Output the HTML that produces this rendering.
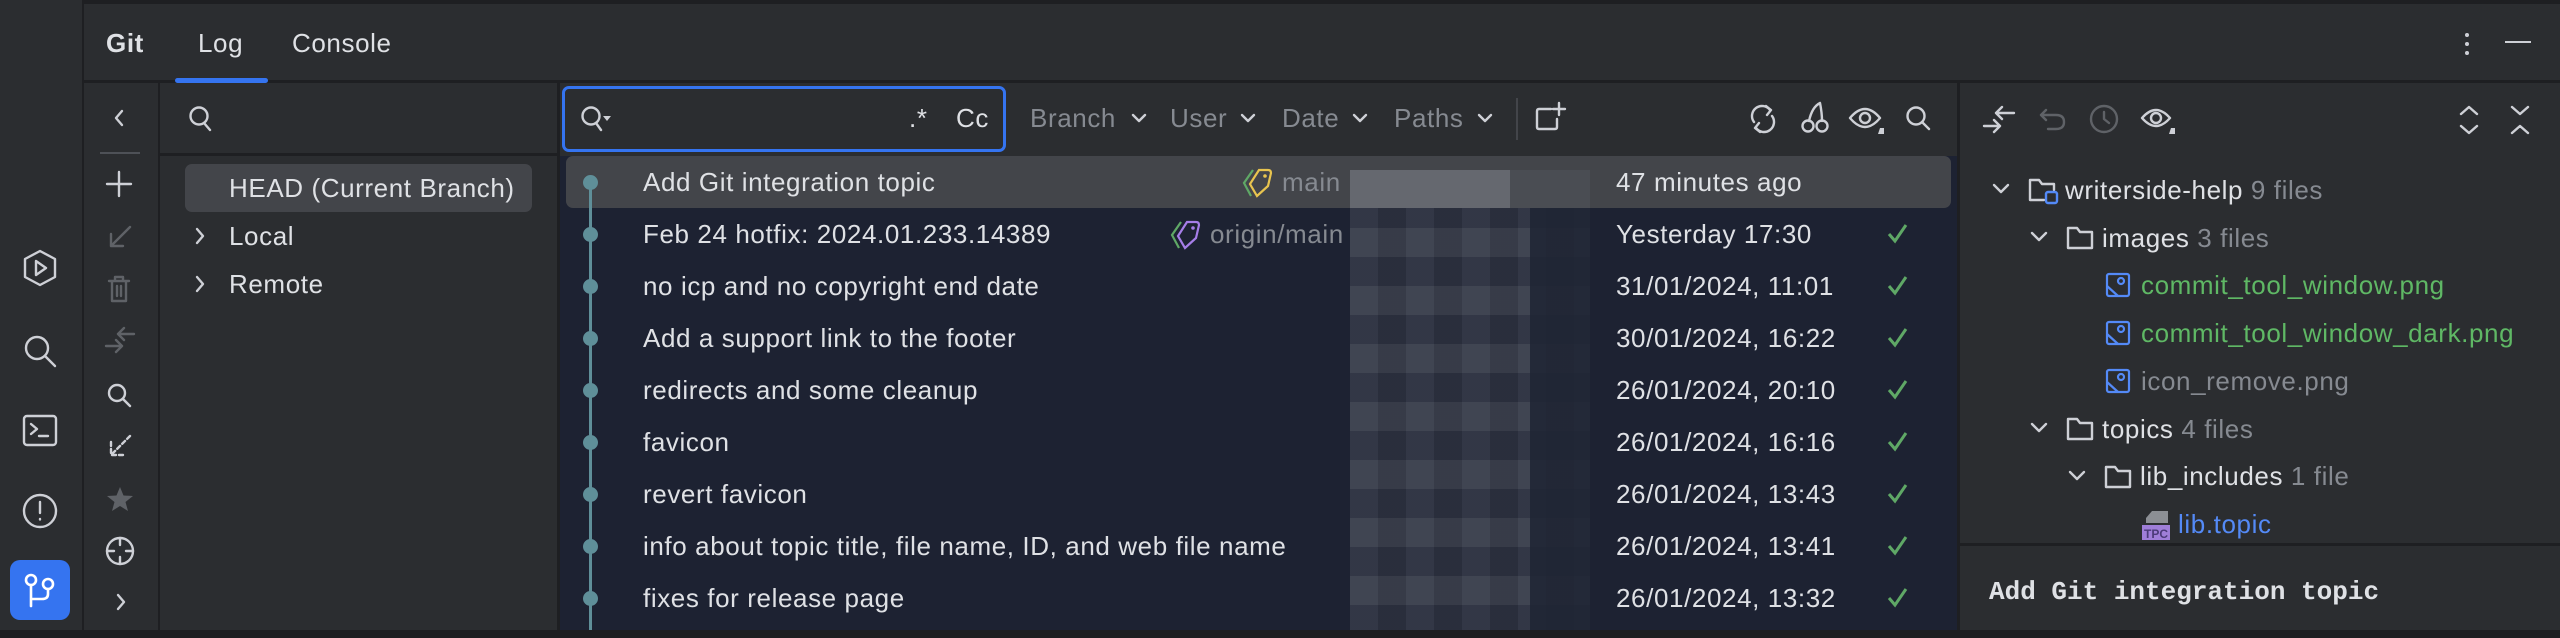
<!DOCTYPE html>
<html><head><meta charset="utf-8">
<style>
*{box-sizing:border-box;margin:0;padding:0}
body{width:2560px;height:638px;background:#2b2d30;font-family:"Liberation Sans",sans-serif;color:#dfe1e5;position:relative;overflow:hidden}
.a{position:absolute}
.t{position:absolute;font-size:26px;letter-spacing:0.6px;white-space:nowrap;line-height:28px}
.g{color:#868a91}
svg{position:absolute;overflow:visible}
.ic{fill:none;stroke:#ced0d6;stroke-width:2.4;stroke-linecap:round;stroke-linejoin:round}
.dim{stroke:#5f6267}
.chk{fill:none;stroke:#5fa866;stroke-width:3}
</style></head><body>
<div class="a" style="left:82px;top:0;width:2px;height:638px;background:#1e1f22"></div>
<div class="a" style="left:82px;top:0;width:2478px;height:4px;background:#1e1f22"></div>
<div class="a" style="left:82px;top:80px;width:2478px;height:3px;background:#1e1f22"></div>
<div class="a" style="left:158px;top:83px;width:2px;height:547px;background:#1e1f22"></div>
<div class="a" style="left:557px;top:83px;width:3px;height:547px;background:#1e1f22"></div>
<div class="a" style="left:1957px;top:83px;width:3px;height:547px;background:#1e1f22"></div>
<div class="a" style="left:160px;top:153px;width:398px;height:3px;background:#1e1f22"></div>
<div class="a" style="left:0;top:630px;width:2560px;height:8px;background:#1e1f22"></div>

<div class="t" style="left:106px;top:29px;font-weight:bold">Git</div>
<div class="t" style="left:198px;top:29px">Log</div>
<div class="t" style="left:292px;top:29px">Console</div>
<div class="a" style="left:175px;top:78px;width:93px;height:5px;background:#3574f0;border-radius:3px"></div>
<div class="a" style="left:2465px;top:33px;width:4px;height:4px;border-radius:2px;background:#ced0d6;box-shadow:0 9px 0 #ced0d6,0 18px 0 #ced0d6"></div>
<div class="a" style="left:2505px;top:41px;width:26px;height:2px;background:#ced0d6"></div>

<svg style="left:20px;top:248px" width="40" height="40"><path class="ic" d="M20 3 L35 11 L35 29 L20 37 L5 29 L5 11 Z M16 13 L26 20 L16 27 Z"/></svg>
<svg style="left:22px;top:333px" width="36" height="36"><circle class="ic" cx="15" cy="15" r="11"/><path class="ic" d="M23 23 L33 33"/></svg>
<svg style="left:22px;top:414px" width="36" height="34"><rect class="ic" x="2" y="2" width="32" height="29" rx="3"/><path class="ic" d="M9 10 L15 15 L9 20 M17 22 L26 22"/></svg>
<svg style="left:22px;top:493px" width="36" height="36"><circle class="ic" cx="18" cy="18" r="16"/><path class="ic" d="M18 9 L18 20 M18 26 L18 26.5"/></svg>
<div class="a" style="left:10px;top:560px;width:60px;height:60px;background:#3574f0;border-radius:10px"></div>
<svg style="left:22px;top:572px" width="36" height="36"><g fill="none" stroke="#fff" stroke-width="2.6" stroke-linecap="round"><circle cx="9" cy="8" r="5"/><circle cx="26" cy="12" r="5"/><path d="M9 13 L9 34 M26 17 L26 22 Q26 27 20 27 L9 27"/></g></svg>

<svg style="left:112px;top:108px" width="16" height="20"><path class="ic" d="M10 3 L4 10 L10 17"/></svg>
<div class="a" style="left:100px;top:152px;width:40px;height:2px;background:#4e5157"></div>
<svg style="left:105px;top:170px" width="28" height="28"><path class="ic" d="M14 2 L14 26 M2 14 L26 14"/></svg>
<svg style="left:108px;top:225px" width="24" height="24"><path class="ic dim" d="M22 2 L3 21 M3 9 L3 21 L15 21"/></svg>
<svg style="left:106px;top:275px" width="26" height="28"><path class="ic dim" d="M3 6 L23 6 M9 6 L9 2 L17 2 L17 6 M6 6 L6 26 L20 26 L20 6 M11 11 L11 21 M15 11 L15 21"/></svg>
<svg style="left:104px;top:326px" width="32" height="28"><path class="ic dim" d="M14 8 L30 8 M20 2 L14 8 L20 14 M2 20 L18 20 M12 14 L18 20 L12 26"/></svg>
<svg style="left:106px;top:382px" width="26" height="26"><circle class="ic" cx="11" cy="11" r="8"/><path class="ic" d="M17 17 L24 24"/></svg>
<svg style="left:108px;top:434px" width="24" height="24"><path class="ic" d="M22 2 L4 20 M3 8 L3 21 L16 21" stroke-dasharray="4 3"/></svg>
<svg style="left:106px;top:486px" width="28" height="26"><path fill="#5f6267" d="M14 1 L17.5 9.5 L27 10 L19.5 16 L22 25 L14 20 L6 25 L8.5 16 L1 10 L10.5 9.5 Z"/></svg>
<svg style="left:105px;top:536px" width="30" height="30"><circle class="ic" cx="15" cy="15" r="13"/><path class="ic" d="M15 2 L15 9 M15 21 L15 28 M2 15 L9 15 M21 15 L28 15"/></svg>
<svg style="left:114px;top:592px" width="14" height="20"><path class="ic" d="M4 3 L10 10 L4 17"/></svg>

<svg style="left:188px;top:105px" width="26" height="28"><circle class="ic" cx="11" cy="11" r="8.5"/><path class="ic" d="M16 18 L22 25"/></svg>
<div class="a" style="left:185px;top:164px;width:347px;height:48px;background:#43454a;border-radius:7px"></div>
<div class="t" style="left:229px;top:174px">HEAD (Current Branch)</div>
<svg style="left:194px;top:226px" width="12" height="20"><path class="ic" d="M3 3 L9 10 L3 17"/></svg>
<div class="t" style="left:229px;top:222px">Local</div>
<svg style="left:194px;top:274px" width="12" height="20"><path class="ic" d="M3 3 L9 10 L3 17"/></svg>
<div class="t" style="left:229px;top:270px">Remote</div>

<div class="a" style="left:562px;top:86px;width:444px;height:66px;border:3px solid #3574f0;border-radius:7px"></div>
<svg style="left:580px;top:105px" width="34" height="28"><circle class="ic" cx="11" cy="11" r="8.5"/><path class="ic" d="M16 18 L21 25"/><path fill="#ced0d6" d="M23 11 L31 11 L27 16 Z"/></svg>
<div class="t" style="left:909px;top:104px">.*</div>
<div class="t" style="left:956px;top:104px">Cc</div>
<div class="t g" style="left:1030px;top:104px">Branch</div>
<svg style="left:1131px;top:112px" width="16" height="12"><path class="ic" stroke="#868a91" d="M2 3 L8 9 L14 3"/></svg>
<div class="t g" style="left:1170px;top:104px">User</div>
<svg style="left:1240px;top:112px" width="16" height="12"><path class="ic" stroke="#868a91" d="M2 3 L8 9 L14 3"/></svg>
<div class="t g" style="left:1282px;top:104px">Date</div>
<svg style="left:1352px;top:112px" width="16" height="12"><path class="ic" stroke="#868a91" d="M2 3 L8 9 L14 3"/></svg>
<div class="t g" style="left:1394px;top:104px">Paths</div>
<svg style="left:1477px;top:112px" width="16" height="12"><path class="ic" stroke="#868a91" d="M2 3 L8 9 L14 3"/></svg>
<div class="a" style="left:1516px;top:98px;width:2px;height:42px;background:#43454a"></div>
<svg style="left:1535px;top:101px" width="32" height="30"><path class="ic" d="M16 8 L4 8 Q2 8 2 10 L2 26 Q2 28 4 28 L20 28 Q22 28 22 26 L22 18 M24 2 L24 14 M18 8 L30 8"/></svg>
<svg style="left:1748px;top:104px" width="30" height="30"><path class="ic" d="M6 18 A10 10 0 0 1 22 6 M24 12 A10 10 0 0 1 8 24 M18 2 L23 6 L19 11 M12 28 L7 24 L11 19"/></svg>
<svg style="left:1800px;top:101px" width="30" height="34"><path class="ic" d="M20 2 Q12 6 9 20 M20 2 Q22 12 22 20"/><circle class="ic" cx="8" cy="25" r="5.5"/><circle class="ic" cx="22" cy="25" r="5.5"/></svg>
<svg style="left:1848px;top:104px" width="38" height="32"><path class="ic" d="M2 14 Q17 -4 32 14 Q17 32 2 14 Z"/><circle class="ic" cx="17" cy="14" r="5"/><path fill="#ced0d6" d="M32 24 L36 24 L36 30 L30 30 Z"/></svg>
<svg style="left:1905px;top:105px" width="28" height="28"><circle class="ic" cx="11" cy="11" r="8.5"/><path class="ic" d="M17 17 L24 24"/></svg>

<div class="a" style="left:560px;top:156px;width:1397px;height:474px;background:#1d2232"></div>
<div class="a" style="left:566px;top:156px;width:1385px;height:52px;background:#43454a;border-radius:7px"></div>
<div class="a" style="left:589px;top:182px;width:3px;height:448px;background:#5f8f99"></div>
<div class="a" style="left:1350px;top:170px;width:240px;height:460px;background:repeating-linear-gradient(180deg,#3a3f4c 0 29px,#2c3140 29px 58px)"></div>
<div class="a" style="left:1350px;top:170px;width:240px;height:460px;background:repeating-linear-gradient(90deg,rgba(255,255,255,0.03) 0 28px,rgba(0,0,0,0.06) 28px 56px)"></div>
<div class="a" style="left:1530px;top:170px;width:60px;height:460px;background:#1f2434;opacity:.85"></div>
<div class="a" style="left:1350px;top:170px;width:240px;height:38px;background:#65686f"></div>
<div class="a" style="left:1510px;top:170px;width:80px;height:38px;background:#4a4d53"></div>

<div class="a" style="left:583px;top:175px;width:15px;height:15px;border-radius:50%;background:#5f8f99;box-shadow:0 52px 0 #5f8f99,0 104px 0 #5f8f99,0 156px 0 #5f8f99,0 208px 0 #5f8f99,0 260px 0 #5f8f99,0 312px 0 #5f8f99,0 364px 0 #5f8f99,0 416px 0 #5f8f99"></div>
<div class="t" style="left:643px;top:168px">Add Git integration topic</div>
<div class="t" style="left:643px;top:220px">Feb 24 hotfix: 2024.01.233.14389</div>
<div class="t" style="left:643px;top:272px">no icp and no copyright end date</div>
<div class="t" style="left:643px;top:324px">Add a support link to the footer</div>
<div class="t" style="left:643px;top:376px">redirects and some cleanup</div>
<div class="t" style="left:643px;top:428px">favicon</div>
<div class="t" style="left:643px;top:480px">revert favicon</div>
<div class="t" style="left:643px;top:532px">info about topic title, file name, ID, and web file name</div>
<div class="t" style="left:643px;top:584px">fixes for release page</div>
<svg style="left:1242px;top:168px" width="36" height="30"><path fill="none" stroke="#5fa866" stroke-width="2.2" d="M11 2 L2 15 L9 28"/><path fill="none" stroke="#e8c44f" stroke-width="2.2" d="M17 2 L26 2 Q29 2 29 5 L26 18 L15 28 L8 16 Z"/><circle cx="23" cy="8" r="1.8" fill="#e8c44f"/></svg>
<div class="t g" style="left:1282px;top:168px">main</div>
<svg style="left:1170px;top:220px" width="36" height="30"><path fill="none" stroke="#5fa866" stroke-width="2.2" d="M11 2 L2 15 L9 28"/><path fill="none" stroke="#a67ee8" stroke-width="2.2" d="M17 2 L26 2 Q29 2 29 5 L26 18 L15 28 L8 16 Z"/><circle cx="23" cy="8" r="1.8" fill="#a67ee8"/></svg>
<div class="t g" style="left:1210px;top:220px">origin/main</div>
<div class="t" style="left:1616px;top:168px">47 minutes ago</div>
<div class="t" style="left:1616px;top:220px">Yesterday 17:30</div>
<div class="t" style="left:1616px;top:272px">31/01/2024, 11:01</div>
<div class="t" style="left:1616px;top:324px">30/01/2024, 16:22</div>
<div class="t" style="left:1616px;top:376px">26/01/2024, 20:10</div>
<div class="t" style="left:1616px;top:428px">26/01/2024, 16:16</div>
<div class="t" style="left:1616px;top:480px">26/01/2024, 13:43</div>
<div class="t" style="left:1616px;top:532px">26/01/2024, 13:41</div>
<div class="t" style="left:1616px;top:584px">26/01/2024, 13:32</div>
<svg style="left:1886px;top:222px" width="24" height="376"><g class="chk"><path d="M3 12 L9 19 L20 3"/><path transform="translate(0,52)" d="M3 12 L9 19 L20 3"/><path transform="translate(0,104)" d="M3 12 L9 19 L20 3"/><path transform="translate(0,156)" d="M3 12 L9 19 L20 3"/><path transform="translate(0,208)" d="M3 12 L9 19 L20 3"/><path transform="translate(0,260)" d="M3 12 L9 19 L20 3"/><path transform="translate(0,312)" d="M3 12 L9 19 L20 3"/><path transform="translate(0,364)" d="M3 12 L9 19 L20 3"/></g></svg>

<svg style="left:1982px;top:104px" width="34" height="32"><path class="ic" d="M14 9 L32 9 M20 3 L14 9 L20 15 M2 22 L18 22 M12 16 L18 22 L12 28"/></svg>
<svg style="left:2038px;top:106px" width="30" height="28"><path class="ic dim" d="M8 4 L3 9 L8 14 M3 9 L18 9 Q26 9 26 16 Q26 23 18 23 L10 23"/></svg>
<svg style="left:2089px;top:104px" width="30" height="30"><circle class="ic dim" cx="15" cy="15" r="13"/><path class="ic dim" d="M15 8 L15 15 L20 19"/></svg>
<svg style="left:2140px;top:106px" width="36" height="30"><path class="ic" d="M2 12 Q16 -4 30 12 Q16 28 2 12 Z"/><circle class="ic" cx="16" cy="12" r="5"/><path fill="#ced0d6" d="M31 22 L35 22 L35 28 L29 28 Z"/></svg>
<svg style="left:2458px;top:104px" width="22" height="32"><path class="ic" d="M3 10 L11 3 L19 10 M3 22 L11 29 L19 22"/></svg>
<svg style="left:2509px;top:104px" width="22" height="32"><path class="ic" d="M3 3 L11 10 L19 3 M3 29 L11 22 L19 29"/></svg>

<svg style="left:1992px;top:182px" width="18" height="14"><path class="ic" d="M2 3 L9 10 L16 3"/></svg>
<svg style="left:2028px;top:176px" width="32" height="30"><path class="ic" d="M2 24 L2 4 L11 4 L14 8 L26 8 L26 14 M16 24 L2 24"/><rect fill="none" stroke="#548af7" stroke-width="2.4" x="18" y="16" width="11" height="11" rx="2"/></svg>
<div class="t" style="left:2065px;top:176px">writerside-help <span class="g">9 files</span></div>

<svg style="left:2030px;top:230px" width="18" height="14"><path class="ic" d="M2 3 L9 10 L16 3"/></svg>
<svg style="left:2066px;top:224px" width="30" height="28"><path class="ic" d="M2 24 L2 4 L11 4 L14 8 L26 8 L26 24 Z"/></svg>
<div class="t" style="left:2102px;top:224px">images <span class="g">3 files</span></div>

<svg style="left:2105px;top:272px" width="26" height="26"><g fill="none" stroke="#548af7" stroke-width="2.2"><rect x="2" y="2" width="22" height="22" rx="2"/><circle cx="16" cy="9" r="3"/><path d="M2 14 L13 24"/></g></svg>
<div class="t" style="left:2141px;top:271px;color:#5fb865">commit_tool_window.png</div>
<svg style="left:2105px;top:320px" width="26" height="26"><g fill="none" stroke="#548af7" stroke-width="2.2"><rect x="2" y="2" width="22" height="22" rx="2"/><circle cx="16" cy="9" r="3"/><path d="M2 14 L13 24"/></g></svg>
<div class="t" style="left:2141px;top:319px;color:#5fb865">commit_tool_window_dark.png</div>
<svg style="left:2105px;top:368px" width="26" height="26"><g fill="none" stroke="#548af7" stroke-width="2.2"><rect x="2" y="2" width="22" height="22" rx="2"/><circle cx="16" cy="9" r="3"/><path d="M2 14 L13 24"/></g></svg>
<div class="t g" style="left:2141px;top:367px">icon_remove.png</div>

<svg style="left:2030px;top:421px" width="18" height="14"><path class="ic" d="M2 3 L9 10 L16 3"/></svg>
<svg style="left:2066px;top:415px" width="30" height="28"><path class="ic" d="M2 24 L2 4 L11 4 L14 8 L26 8 L26 24 Z"/></svg>
<div class="t" style="left:2102px;top:415px">topics <span class="g">4 files</span></div>

<svg style="left:2068px;top:469px" width="18" height="14"><path class="ic" d="M2 3 L9 10 L16 3"/></svg>
<svg style="left:2104px;top:463px" width="30" height="28"><path class="ic" d="M2 24 L2 4 L11 4 L14 8 L26 8 L26 24 Z"/></svg>
<div class="t" style="left:2140px;top:462px">lib_includes <span class="g">1 file</span></div>

<svg style="left:2142px;top:510px" width="28" height="30"><path fill="#8c8f94" d="M10 1 L26 1 L26 13 L4 13 L4 8 Z"/><rect x="0" y="15" width="28" height="15" fill="#9f7ed8"/><text x="2" y="28" font-family="Liberation Sans" font-size="12" font-weight="bold" fill="#4b3a78">TPC</text></svg>
<div class="t" style="left:2178px;top:510px;color:#548af7">lib.topic</div>

<div class="a" style="left:1960px;top:543px;width:600px;height:3px;background:#1e1f22"></div>
<div class="t" style="left:1989px;top:578px;font-family:'Liberation Mono',monospace;font-weight:bold;font-size:26px;letter-spacing:0">Add Git integration topic</div>
</body></html>
